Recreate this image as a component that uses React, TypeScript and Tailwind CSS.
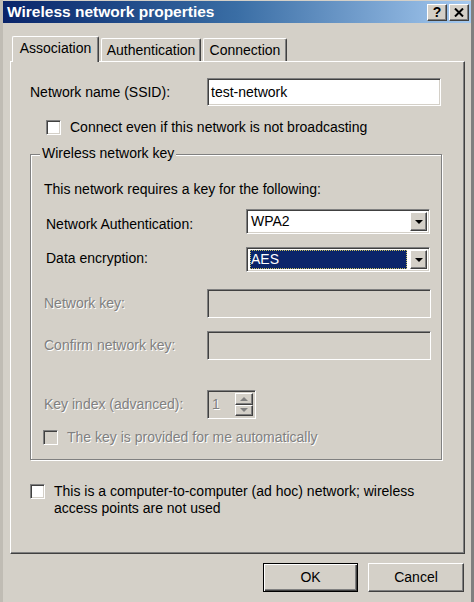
const raised =
  'border-t border-l border-t-white border-l-white border-r border-b border-r-[#404040] border-b-[#404040] shadow-[inset_-1px_-1px_0_#808080]'
const sunken =
  'border-t border-l border-t-[#808080] border-l-[#808080] border-r border-b border-r-white border-b-white shadow-[inset_1px_1px_0_#404040,inset_-1px_-1px_0_#d4d0c8]'
const disabledText = 'text-[#808080] [text-shadow:1px_1px_0_#ffffff]'

function Checkbox({ disabled }: { disabled?: boolean }) {
  return (
    <span
      className={`block w-[15px] h-[15px] shrink-0 ${sunken} ${disabled ? 'bg-[#d4d0c8]' : 'bg-white'}`}
    />
  )
}

function Arrow({ down = true, gray }: { down?: boolean; gray?: boolean }) {
  return (
    <svg width="8" height="4" viewBox="0 0 8 4" className={down ? '' : 'rotate-180'}>
      <path d="M0 0h8L4 4z" fill={gray ? '#808080' : '#000'} />
    </svg>
  )
}

function Select({ value, selected }: { value: string; selected?: boolean }) {
  return (
    <div className={`flex w-[184px] h-[25px] bg-white ${sunken} p-[2px]`}>
      <div className="flex-1 flex items-center pl-[1px] pr-[3px]">
        {selected ? (
          <span className="flex-1 h-full flex items-center px-[1px] bg-[#0a246a] text-white outline-1 outline-dotted outline-[#c8c060] -outline-offset-1">
            {value}
          </span>
        ) : (
          <span className="pl-[1px]">{value}</span>
        )}
      </div>
      <div className={`w-[17px] h-full bg-[#d4d0c8] flex items-center justify-center ${raised}`}>
        <Arrow />
      </div>
    </div>
  )
}

export default function App() {
  return (
    <div className="w-[474px] h-[602px] bg-[#d4d0c8] border-l-[3px] border-l-[#c0bcb4] border-r-[3px] border-r-[#808080] pt-[1px] font-['Liberation_Sans',Arial,sans-serif] text-[14px] text-black overflow-hidden">
      {/* Title bar */}
      <div className="h-[22px] flex items-center justify-between bg-gradient-to-r from-[#0a246a] via-[#3a6ea5] to-[#a6caf0] pl-[4px] pr-[2px]">
        <span className="text-white font-bold text-[15.5px] leading-none">Wireless network properties</span>
        <div className="flex gap-[2px]">
          <span className={`w-[20px] h-[17px] bg-[#d4d0c8] flex items-center justify-center font-bold text-[14px] leading-none ${raised}`}>
            ?
          </span>
          <span className={`w-[20px] h-[17px] bg-[#d4d0c8] flex items-center justify-center ${raised}`}>
            <svg width="10" height="9" viewBox="0 0 10 9">
              <path d="M1 0.5l8 8M9 0.5l-8 8" stroke="#000" strokeWidth="2" />
            </svg>
          </span>
        </div>
      </div>

      {/* Tabs */}
      <div className="ml-[7px] w-[455px] mt-[12px]">
        <div className="flex items-end pl-[2px] gap-[2px] h-[26px]">
          <div className="relative z-10 w-[87px] h-[26px] -mb-[1px] bg-[#d4d0c8] border-t border-l border-white border-r border-r-[#404040] shadow-[inset_-1px_0_0_#808080] rounded-t-[2px] flex items-center justify-center pb-[2px]">
            Association
          </div>
          <div className="w-[100px] h-[23px] bg-[#d4d0c8] border-t border-l border-white border-r border-r-[#404040] shadow-[inset_-1px_0_0_#808080] rounded-t-[2px] flex items-center justify-center">
            Authentication
          </div>
          <div className="w-[84px] h-[23px] bg-[#d4d0c8] border-t border-l border-white border-r border-r-[#404040] shadow-[inset_-1px_0_0_#808080] rounded-t-[2px] flex items-center justify-center">
            Connection
          </div>
        </div>

        {/* Panel */}
        <div className={`h-[493px] ${raised} pl-[19px] pt-[16px]`}>
          <div className="flex items-center h-[28px]">
            <span className="w-[177px]">Network name (SSID):</span>
            <div className={`w-[234px] h-[28px] bg-white ${sunken} flex items-center pl-[3px]`}>test-network</div>
          </div>

          <div className="flex items-center h-[17px] mt-[13px] pl-[16px] gap-[9px]">
            <Checkbox />
            <span>Connect even if this network is not broadcasting</span>
          </div>

          {/* Group box */}
          <div className="relative mt-[18px] w-[412px] h-[306px] border border-[#808080] shadow-[inset_1px_1px_0_#ffffff,1px_1px_0_#ffffff] pl-[13px] pt-[26px]">
            <span className="absolute -top-[10px] left-[9px] px-[2px] bg-[#d4d0c8] leading-[17px]">Wireless network key</span>

            <div className="leading-[17px]">This network requires a key for the following:</div>

            <div className="flex items-center mt-[11px] h-[25px]">
              <span className="w-[202px] pl-[2px] pt-[5px]">Network Authentication:</span>
              <Select value="WPA2" />
            </div>

            <div className="flex items-center mt-[13px] h-[25px]">
              <span className="w-[202px] pl-[2px] pb-[2px]">Data encryption:</span>
              <Select value="AES" selected />
            </div>

            <div className="flex items-center mt-[17px] h-[29px]">
              <span className={`w-[163px] ${disabledText}`}>Network key:</span>
              <div className={`w-[224px] h-[29px] ${sunken}`} />
            </div>

            <div className="flex items-center mt-[13px] h-[29px]">
              <span className={`w-[163px] ${disabledText}`}>Confirm network key:</span>
              <div className={`w-[224px] h-[29px] ${sunken}`} />
            </div>

            <div className="flex items-center mt-[30px] h-[29px]">
              <span className={`w-[163px] ${disabledText}`}>Key index (advanced):</span>
              <div className={`w-[49px] h-[29px] ${sunken} flex items-center p-[2px]`}>
                <span className={`flex-1 pl-[2px] ${disabledText}`}>1</span>
                <div className="flex flex-col w-[18px] h-full">
                  <span className={`flex-1 bg-[#d4d0c8] flex items-center justify-center ${raised}`}>
                    <Arrow down={false} gray />
                  </span>
                  <span className={`flex-1 bg-[#d4d0c8] flex items-center justify-center ${raised}`}>
                    <Arrow gray />
                  </span>
                </div>
              </div>
            </div>

            <div className="flex items-center mt-[10px] h-[16px] -ml-[1px] gap-[9px]">
              <Checkbox disabled />
              <span className={disabledText}>The key is provided for me automatically</span>
            </div>
          </div>

          <div className="flex items-start mt-[24px] gap-[9px]">
            <Checkbox />
            <span className="leading-[17px] -mt-[1px] w-[385px]">
              This is a computer-to-computer (ad hoc) network; wireless access points are not used
            </span>
          </div>
        </div>
      </div>

      {/* Buttons */}
      <div className="flex justify-end gap-[10px] mt-[9px] pr-[7px]">
        <button className="w-[95px] h-[29px] bg-[#d4d0c8] border border-black shadow-[inset_1px_1px_0_#ffffff,inset_-1px_-1px_0_#404040,inset_-2px_-2px_0_#808080]">
          OK
        </button>
        <button className={`w-[96px] h-[29px] bg-[#d4d0c8] ${raised}`}>Cancel</button>
      </div>
    </div>
  )
}
